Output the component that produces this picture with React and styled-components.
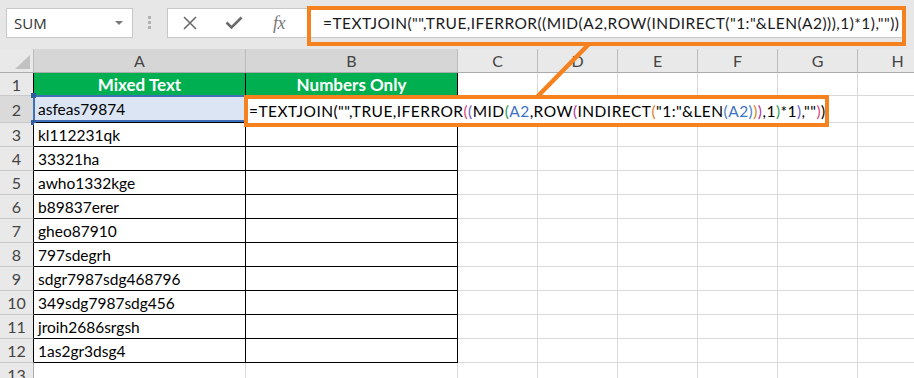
import React from 'react';
import styled, { createGlobalStyle } from 'styled-components';

const ORANGE = '#f5821f';
const CELL_FONT = `"Lato", "Open Sans", sans-serif`;

const GlobalStyle = createGlobalStyle`
  html, body { margin: 0; padding: 0; background: #ffffff; }
  body { width: 914px; height: 378px; overflow: hidden; font-family: ${CELL_FONT}; }
  * { box-sizing: border-box; }
`;

const Page = styled.div`
  position: relative;
  width: 914px;
  height: 378px;
  overflow: hidden;
  background: #ffffff;
`;

const Toolbar = styled.div`
  display: flex;
  align-items: flex-start;
  height: 49px;
  padding: 8px 0 0 6px;
  background: #e7e7e7;
`;

const NameBox = styled.div`
  display: flex;
  align-items: center;
  justify-content: space-between;
  width: 127px;
  height: 30px;
  padding: 0 9px 0 7px;
  background: #ffffff;
  border: 1px solid #c8c8c8;
  font-family: "Open Sans", sans-serif;
  font-size: 15px;
  color: #333333;
`;

const DropArrow = styled.span`
  width: 0;
  height: 0;
  border-left: 4px solid transparent;
  border-right: 4px solid transparent;
  border-top: 4px solid #7a7a7a;
`;

const Grip = styled.div`
  display: flex;
  flex-direction: column;
  gap: 2px;
  margin: 8px 0 0 15px;
`;

const GripDot = styled.span`
  width: 3px;
  height: 3px;
  background: #b2b2b2;
`;

const FormulaBox = styled.div`
  display: flex;
  align-items: center;
  width: 738px;
  height: 30px;
  margin-left: 16px;
  background: #ffffff;
  border: 1px solid #c8c8c8;
`;

const IconButton = styled.div`
  display: flex;
  align-items: center;
  justify-content: center;
  width: ${p => p.$w || 44}px;
  height: 100%;
  color: #6a6a6a;
`;

const Fx = styled.span`
  font-family: "Liberation Serif", "DejaVu Serif", serif;
  font-style: italic;
  font-size: 18px;
  color: #777777;
  letter-spacing: -0.5px;
`;

const FormulaText = styled.div`
  padding-left: 21px;
  font-family: ${CELL_FONT};
  font-size: 15.5px;
  letter-spacing: 0.46px;
  color: #1a1a1a;
  white-space: nowrap;
`;

const BarHighlight = styled.div`
  position: absolute;
  left: 307px;
  top: 6px;
  width: 599px;
  height: 40px;
  border: 4px solid ${ORANGE};
  pointer-events: none;
`;

const Connector = styled.svg`
  position: absolute;
  left: 0;
  top: 0;
  pointer-events: none;
`;

const Sheet = styled.div`
  position: relative;
  display: grid;
  grid-template-columns: 34px 212px 212px 80px 80px 80px 80px 80px 80px;
  grid-template-rows: 24px 23px 27px repeat(10, 24px) 24px;
  font-family: ${CELL_FONT};
  font-size: 15.5px;
`;

const Corner = styled.div`
  position: relative;
  background: #e9e9e9;
  border-right: 1px solid #bcbcbc;
  border-bottom: 1px solid #ababab;
`;

const SelectAll = styled.span`
  position: absolute;
  right: 3px;
  bottom: 3px;
  width: 0;
  height: 0;
  border-left: 15px solid transparent;
  border-bottom: 14px solid #c2c2c2;
`;

const ColHeader = styled.div`
  display: flex;
  align-items: center;
  justify-content: center;
  background: ${p => (p.$active ? '#d6d6d6' : '#e9e9e9')};
  border-right: 1px solid #bcbcbc;
  border-bottom: 1px solid #ababab;
  color: #444444;
  font-size: 16px;
`;

const RowHeader = styled.div`
  display: flex;
  align-items: center;
  justify-content: center;
  background: ${p => (p.$active ? '#dadada' : '#e9e9e9')};
  border-right: 1px solid ${p => (p.$boxed ? '#000000' : '#ababab')};
  border-bottom: 1px solid #c8c8c8;
  color: #444444;
  font-size: 16px;
`;

const Cell = styled.div`
  position: relative;
  display: flex;
  align-items: center;
  justify-content: ${p => (p.$head ? 'center' : 'flex-start')};
  padding-left: ${p => (p.$head ? 0 : 4)}px;
  background: ${p => (p.$head ? '#00b050' : p.$ref ? '#dbe5f4' : '#ffffff')};
  border-right: 1px solid ${p => (p.$boxed ? '#000000' : '#d9d9d9')};
  border-bottom: 1px solid ${p => (p.$boxed ? '#000000' : '#d9d9d9')};
  color: ${p => (p.$head ? '#ffffff' : '#000000')};
  font-weight: ${p => (p.$head ? 700 : 400)};
  font-size: ${p => (p.$head ? '17px' : 'inherit')};
  white-space: nowrap;
`;

const RefFrame = styled.span`
  position: absolute;
  left: -1px;
  top: -1px;
  right: -1px;
  bottom: 0;
  border: 2px solid #3e6fb8;
  pointer-events: none;
`;

const Handle = styled.span`
  position: absolute;
  width: 5px;
  height: 5px;
  background: #2f5d9e;
  left: -3px;
  ${p => (p.$bottom ? 'bottom: -3px;' : 'top: -3px;')}
`;

const Editor = styled.div`
  position: absolute;
  left: 244px;
  top: 46px;
  width: 585px;
  height: 32px;
  display: flex;
  align-items: center;
  padding-left: 1px;
  background: #ffffff;
  border: 4px solid ${ORANGE};
  color: #000000;
  white-space: nowrap;
  font-size: 15.5px;
  letter-spacing: 0.46px;
`;

const Tok = styled.span`
  color: ${p => p.$c || '#000000'};
`;

const Caret = styled.span`
  display: inline-block;
  width: 1px;
  height: 20px;
  margin-left: 0;
  background: #000000;
`;

const C = {
  d2: '#d9487e',
  d3: '#6d5bc8',
  d4: '#2f9a4f',
  d5: '#b0399c',
  d6: '#d9822b',
  d7: '#4a7dcb',
  ref: '#3f73c4',
};

const FORMULA = '=TEXTJOIN("",TRUE,IFERROR((MID(A2,ROW(INDIRECT("1:"&LEN(A2))),1)*1),""))';

const tokens = [
  ['=TEXTJOIN("",TRUE,IFERROR'],
  ['(', C.d2],
  ['(', C.d3],
  ['MID'],
  ['(', C.d4],
  ['A2', C.ref],
  [',ROW'],
  ['(', C.d5],
  ['INDIRECT'],
  ['(', C.d6],
  ['"1:"&LEN'],
  ['(', C.d7],
  ['A2', C.ref],
  [')', C.d7],
  [')', C.d6],
  [')', C.d5],
  [',1'],
  [')', C.d4],
  ['*1'],
  [')', C.d3],
  [',""'],
  [')', C.d2],
  [')'],
];

const COLS = ['A', 'B', 'C', 'D', 'E', 'F', 'G', 'H'];
const DATA = [
  'asfeas79874',
  'kl112231qk',
  '33321ha',
  'awho1332kge',
  'b89837erer',
  'gheo87910',
  '797sdegrh',
  'sdgr7987sdg468796',
  '349sdg7987sdg456',
  'jroih2686srgsh',
  '1as2gr3dsg4',
];

function CloseIcon() {
  return (
    <svg width="14" height="14" viewBox="0 0 14 14">
      <path d="M1 1 L13 13 M13 1 L1 13" stroke="#6a6a6a" strokeWidth="1.6" fill="none" />
    </svg>
  );
}

function CheckIcon() {
  return (
    <svg width="18" height="14" viewBox="0 0 18 14">
      <path d="M1.5 6.5 L6.5 11.5 L16.5 1.5" stroke="#6a6a6a" strokeWidth="2.6" fill="none" />
    </svg>
  );
}

function Row({ n, children, boxed, active }) {
  return (
    <>
      <RowHeader $boxed={boxed} $active={active}>{n}</RowHeader>
      {children}
    </>
  );
}

export default function App() {
  return (
    <Page>
      <GlobalStyle />
      <Toolbar>
        <NameBox>
          <span>SUM</span>
          <DropArrow />
        </NameBox>
        <Grip>
          <GripDot />
          <GripDot />
          <GripDot />
        </Grip>
        <FormulaBox>
          <IconButton $w={44}><CloseIcon /></IconButton>
          <IconButton $w={44}><CheckIcon /></IconButton>
          <IconButton $w={46}><Fx>fx</Fx></IconButton>
          <FormulaText>{FORMULA}</FormulaText>
        </FormulaBox>
      </Toolbar>
      <BarHighlight />

      <Sheet>
        <Corner><SelectAll /></Corner>
        {COLS.map(c => (
          <ColHeader key={c} $active={c === 'A' || c === 'B'}>{c}</ColHeader>
        ))}

        <Row n={1} boxed>
          <Cell $head $boxed>Mixed Text</Cell>
          <Cell $head $boxed>Numbers Only</Cell>
          {COLS.slice(2).map(c => <Cell key={c} />)}
        </Row>

        {DATA.map((txt, i) => (
          <Row key={i} n={i + 2} boxed active={i === 0}>
            <Cell $boxed $ref={i === 0}>
              {txt}
              {i === 0 && (
                <>
                  <RefFrame />
                  <Handle />
                  <Handle $bottom />
                </>
              )}
            </Cell>
            <Cell $boxed />
            {COLS.slice(2).map(c => <Cell key={c} />)}
          </Row>
        ))}

        <Row n={13}>
          {COLS.map(c => <Cell key={c} />)}
        </Row>

        <Editor>
          {tokens.map(([t, col], i) => (
            <Tok key={i} $c={col}>{t}</Tok>
          ))}
          <Caret />
        </Editor>
      </Sheet>

      <Connector width="914" height="378">
        <line x1="589" y1="44" x2="537" y2="97" stroke={ORANGE} strokeWidth="4.5" />
      </Connector>
    </Page>
  );
}
